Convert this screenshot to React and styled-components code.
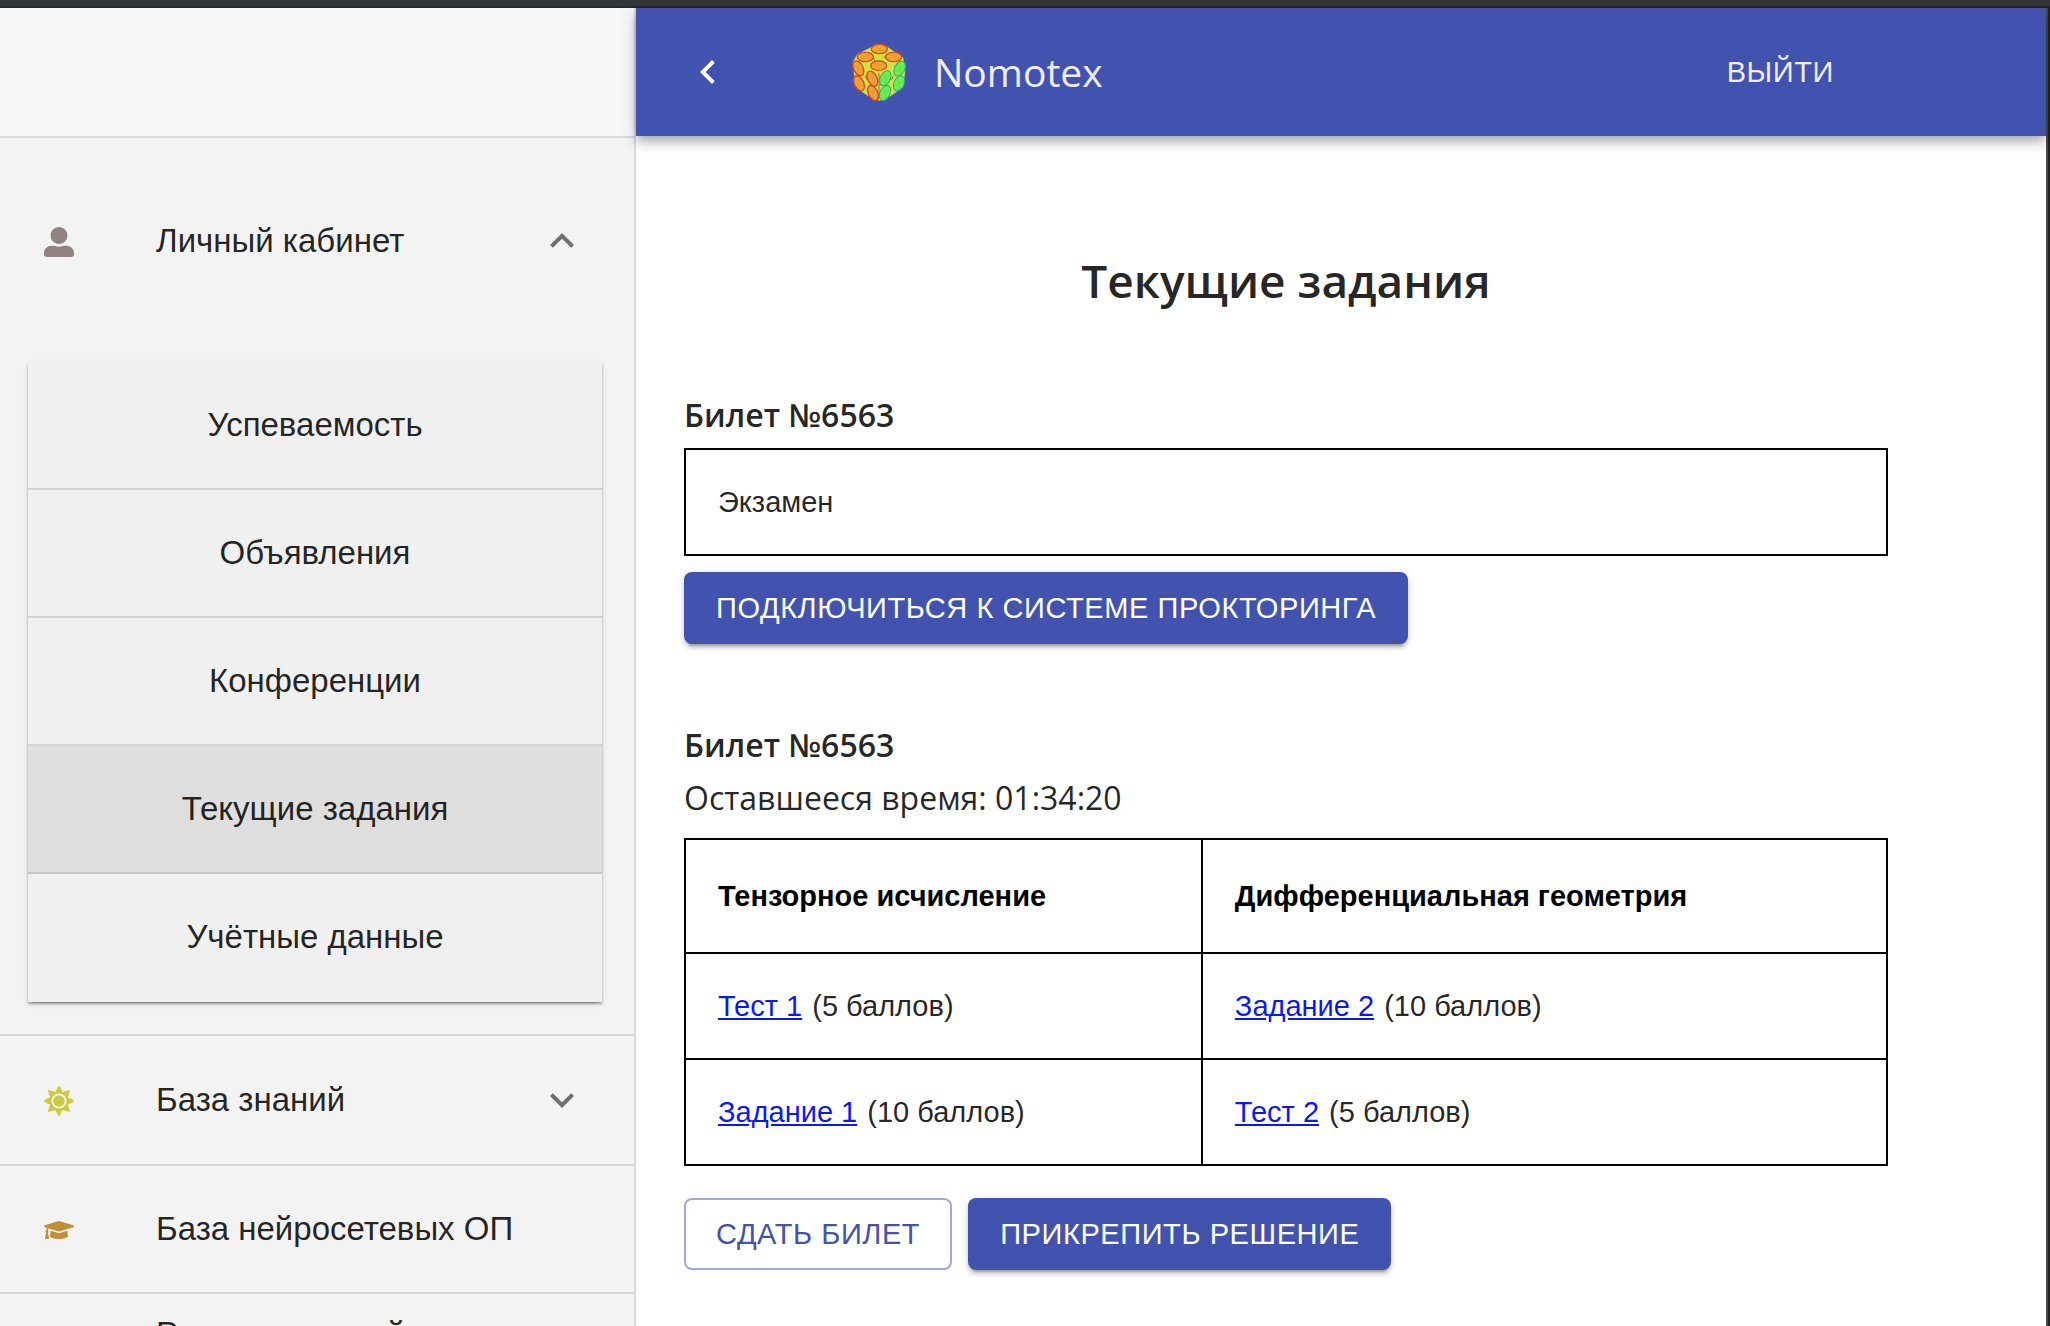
import React, { useState } from "react";
import styled, { createGlobalStyle } from "styled-components";
import { FaUserAlt, FaSun, FaGraduationCap } from "react-icons/fa";

const sans = `"Liberation Sans", Arial, sans-serif`;
const humanist = `"Open Sans", "Noto Sans", sans-serif`;

const GlobalStyle = createGlobalStyle`
  *, *::before, *::after { box-sizing: border-box; }
  html, body { margin: 0; background: #fff; }
  body { font-family: ${sans}; color: rgba(0, 0, 0, 0.87); overflow: hidden; }
`;

const Frame = styled.div`
  display: flex;
  flex-direction: column;
  height: 100vh;
  border-top: 6px solid #35363a;
`;

const Shell = styled.div`
  flex: 1;
  min-height: 0;
  display: flex;
  border-top: 2px solid #28282a;
  border-right: 2px solid #222323;
`;

const Sidebar = styled.aside`
  flex: none;
  width: 636px;
  overflow: hidden;
  background: #f3f3f3;
  border-right: 2px solid #d9d9d9;
`;

const SidebarTop = styled.div`
  height: 130px;
  background: #f7f7f7;
  border-bottom: 2px solid #dadada;
`;

const Section = styled.section`
  border-bottom: 2px solid #d8d8d8;
`;

const SectionButton = styled.button`
  display: grid;
  grid-template-columns: 32px 1fr 48px;
  column-gap: 80px;
  align-items: center;
  width: 100%;
  min-height: ${(p) => (p.$tall ? 206 : p.$link ? 126 : 128)}px;
  padding: 16px 48px 16px 44px;
  border: 0;
  background: none;
  color: inherit;
  font: 33px/48px ${sans};
  text-align: left;
  cursor: pointer;
`;

const SectionIcon = styled.span`
  display: flex;
  color: ${(p) => p.$color};

  svg {
    width: 30px;
    height: auto;
    margin-top: 2px;
  }
`;

const SectionLabel = styled.span`
  grid-column: 2 / ${(p) => (p.$wide ? 4 : 3)};
`;

const MaterialIcon = styled.svg`
  display: block;
  width: 48px;
  height: 48px;
  fill: currentColor;
`;

const Toggle = styled(MaterialIcon)`
  color: rgba(0, 0, 0, 0.54);
  transform: ${(p) => (p.$open ? "rotate(180deg)" : "none")};
`;

const Details = styled.div`
  padding: 18px 32px 32px 28px;
`;

const MenuList = styled.nav`
  display: flex;
  flex-direction: column;
  background: #f0f0f0;
  box-shadow: 0 4px 2px -4px rgba(0, 0, 0, 0.4), 0 2px 2px rgba(0, 0, 0, 0.28),
    0 2px 6px rgba(0, 0, 0, 0.12);
`;

const MenuItem = styled.a`
  display: flex;
  align-items: center;
  justify-content: center;
  height: 128px;
  background: ${(p) => (p.$active ? "#dedede" : "#f0f0f0")};
  border-bottom: 2px solid ${(p) => (p.$active ? "#c4c4c4" : "#d3d3d3")};
  color: inherit;
  font-size: 33px;
  line-height: 48px;
  text-decoration: none;

  &:last-child {
    border-bottom-color: transparent;
  }
`;

const Page = styled.div`
  flex: 1;
  min-width: 0;
  display: flex;
  flex-direction: column;
  border-right: 2px solid #4a4c4b;
`;

const AppBar = styled.header`
  position: relative;
  flex: none;
  display: flex;
  align-items: center;
  height: 128px;
  padding: 0 180px 0 48px;
  background: #4252af;
  color: #efedfc;
  box-shadow: 0 4px 8px -2px rgba(0, 0, 0, 0.2), 0 8px 10px rgba(0, 0, 0, 0.14),
    0 2px 20px rgba(0, 0, 0, 0.12);
`;

const BackButton = styled.button`
  padding: 0;
  border: 0;
  background: none;
  color: #fff;
  cursor: pointer;
`;

const Brand = styled.a`
  display: flex;
  align-items: center;
  gap: 14px;
  margin-left: 108px;
  color: inherit;
  font: 39px/64px ${humanist};
  text-decoration: none;
`;

const LogoArt = styled.svg`
  width: 80px;
  height: 80px;
`;

const ExitButton = styled.button`
  margin-left: auto;
  padding: 12px 32px;
  border: 0;
  background: none;
  color: inherit;
  font: 29px/48px ${sans};
  letter-spacing: 0.02em;
  text-transform: uppercase;
  cursor: pointer;
`;

const Content = styled.main`
  flex: 1;
  min-height: 0;
  padding: 108px 158px 48px 48px;
`;

const Title = styled.h1`
  margin: 0 0 76px;
  font: 600 46px/72px ${humanist};
  text-align: center;
`;

const Ticket = styled.section`
  & + & {
    margin-top: 78px;
  }
`;

const TicketName = styled.h2`
  margin: 0;
  font: 600 32px/46px ${humanist};
`;

const TimeLeft = styled.p`
  margin: 0;
  font: 400 32px/60px ${humanist};
`;

const Grid = styled.table`
  width: 100%;
  margin: 10px 0 ${(p) => p.$bottom}px;
  border-collapse: collapse;
  font-size: 29px;
  line-height: 40px;

  th,
  td {
    padding: 32px;
    border: 2px solid #000;
    text-align: left;
  }

  th {
    color: #000;
    line-height: 48px;
  }

  th:first-child:not(:last-child) {
    width: 43%;
  }

  a {
    margin-right: 2px;
    color: #0a1aee;
    text-decoration: underline;
  }
`;

const Actions = styled.div`
  display: flex;
  gap: 16px;
`;

const Button = styled.button`
  height: 72px;
  padding: 0 ${(p) => (p.$outlined ? 30 : 32)}px;
  border: ${(p) => (p.$outlined ? "2px solid #a0a8d7" : "0")};
  border-radius: 8px;
  background: ${(p) => (p.$outlined ? "transparent" : "#4252af")};
  color: ${(p) => (p.$outlined ? "#4252af" : "#fff")};
  box-shadow: ${(p) =>
    p.$outlined
      ? "none"
      : "0 6px 2px -4px rgba(0,0,0,.2), 0 4px 4px rgba(0,0,0,.14), 0 2px 10px rgba(0,0,0,.12)"};
  font: 29px/48px ${sans};
  letter-spacing: 0.02em;
  text-transform: uppercase;
  cursor: pointer;
`;

const layers = {
  top: [[118, 57], [76, 81], [161, 81], [116, 107]],
  left: [[55, 115], [57, 160], [97, 146], [99, 189]],
  right: [[179, 116], [177, 160], [136, 145], [135, 189]],
};

function Logo() {
  return (
    <LogoArt viewBox="0 6 240 240" aria-hidden="true">
      <path d="M118 28 200 74V168L118 228 36 168V74Z" fill="none" stroke="#6b74c4" strokeWidth="1.5" strokeDasharray="3 5" />
      <path d="M96 50 142 50 190 84 196 120 190 172 152 198 118 212 84 198 46 172 38 96 52 72Z" fill="#d3e23e" />
      <path d="M97 84Q106 84 104 94M130 84Q134 76 142 78M117 128V206M76 138 82 150M160 138 154 150" stroke="#a06a3a" strokeWidth="3" fill="none" />
      {layers.right.map(([x, y]) => (
        <g key={`${x}-${y}`} transform={`translate(${x} ${y}) rotate(26)`}>
          <ellipse rx="15" ry="24" fill="#6cf04a" stroke="#2da58f" strokeWidth="3" />
          <path d="M-10-15 10 15M10-15-10 15" stroke="#55d548" strokeWidth="1.5" />
        </g>
      ))}
      {layers.left.map(([x, y]) => (
        <g key={`${x}-${y}`} transform={`translate(${x} ${y}) rotate(-26)`}>
          <ellipse rx="14" ry="24" fill="#f6a038" stroke="#cf4520" strokeWidth="4" />
          <path d="M-9-15 9 15M9-15-9 15" stroke="#dc8f32" strokeWidth="1.5" />
        </g>
      ))}
      {layers.top.map(([x, y]) => (
        <g key={`${x}-${y}`} transform={`translate(${x} ${y})`}>
          <ellipse rx="24" ry="14" fill="#f6a533" stroke="#d94c1c" strokeWidth="4" />
          <path d="M-16-8 16 8M16-8-16 8" stroke="#d88c2e" strokeWidth="1.5" />
        </g>
      ))}
    </LogoArt>
  );
}

const cabinetLinks = [
  "Успеваемость",
  "Объявления",
  "Конференции",
  "Текущие задания",
  "Учётные данные",
];

function ToggleIcon({ open }) {
  return (
    <Toggle viewBox="0 0 24 24" $open={open} aria-hidden="true">
      <path d="M16.59 8.59 12 13.17 7.41 8.59 6 10l6 6 6-6z" />
    </Toggle>
  );
}

function Task({ name, points }) {
  return (
    <td>
      <a href="#task">{name}</a> ({points} баллов)
    </td>
  );
}

export default function App() {
  const [open, setOpen] = useState(true);
  const [active, setActive] = useState("Текущие задания");

  return (
    <Frame>
      <GlobalStyle />
      <Shell>
        <Sidebar>
          <SidebarTop />
          <Section>
            <SectionButton $tall={open} aria-expanded={open} onClick={() => setOpen(!open)}>
              <SectionIcon $color="#8f8483"><FaUserAlt /></SectionIcon>
              <SectionLabel>Личный кабинет</SectionLabel>
              <ToggleIcon open={open} />
            </SectionButton>
            {open && (
              <Details>
                <MenuList>
                  {cabinetLinks.map((name) => (
                    <MenuItem key={name} href="#cabinet" $active={name === active} onClick={() => setActive(name)}>
                      {name}
                    </MenuItem>
                  ))}
                </MenuList>
              </Details>
            )}
          </Section>
          <Section>
            <SectionButton aria-expanded={false}>
              <SectionIcon $color="#cccb42"><FaSun /></SectionIcon>
              <SectionLabel>База знаний</SectionLabel>
              <ToggleIcon open={false} />
            </SectionButton>
          </Section>
          <Section>
            <SectionButton $link>
              <SectionIcon $color="#c09038"><FaGraduationCap /></SectionIcon>
              <SectionLabel $wide>База нейросетевых ОП</SectionLabel>
            </SectionButton>
          </Section>
          <Section>
            <SectionButton $link>
              <SectionLabel $wide>Реестр моделей и материалов</SectionLabel>
            </SectionButton>
          </Section>
        </Sidebar>
        <Page>
          <AppBar>
            <BackButton aria-label="Назад">
              <MaterialIcon viewBox="0 0 24 24" aria-hidden="true">
                <path d="M15.41 7.41 14 6l-6 6 6 6 1.41-1.41L10.83 12z" />
              </MaterialIcon>
            </BackButton>
            <Brand href="#home">
              <Logo />
              Nomotex
            </Brand>
            <ExitButton>Выйти</ExitButton>
          </AppBar>
          <Content>
            <Title>Текущие задания</Title>
            <Ticket>
              <TicketName>Билет №6563</TicketName>
              <Grid $bottom={16}>
                <tbody>
                  <tr><td>Экзамен</td></tr>
                </tbody>
              </Grid>
              <Button>Подключиться к системе прокторинга</Button>
            </Ticket>
            <Ticket>
              <TicketName>Билет №6563</TicketName>
              <TimeLeft>Оставшееся время: 01:34:20</TimeLeft>
              <Grid $bottom={32}>
                <thead>
                  <tr>
                    <th scope="col">Тензорное исчисление</th>
                    <th scope="col">Дифференциальная геометрия</th>
                  </tr>
                </thead>
                <tbody>
                  <tr>
                    <Task name="Тест 1" points={5} />
                    <Task name="Задание 2" points={10} />
                  </tr>
                  <tr>
                    <Task name="Задание 1" points={10} />
                    <Task name="Тест 2" points={5} />
                  </tr>
                </tbody>
              </Grid>
              <Actions>
                <Button $outlined>Сдать билет</Button>
                <Button>Прикрепить решение</Button>
              </Actions>
            </Ticket>
          </Content>
        </Page>
      </Shell>
    </Frame>
  );
}
